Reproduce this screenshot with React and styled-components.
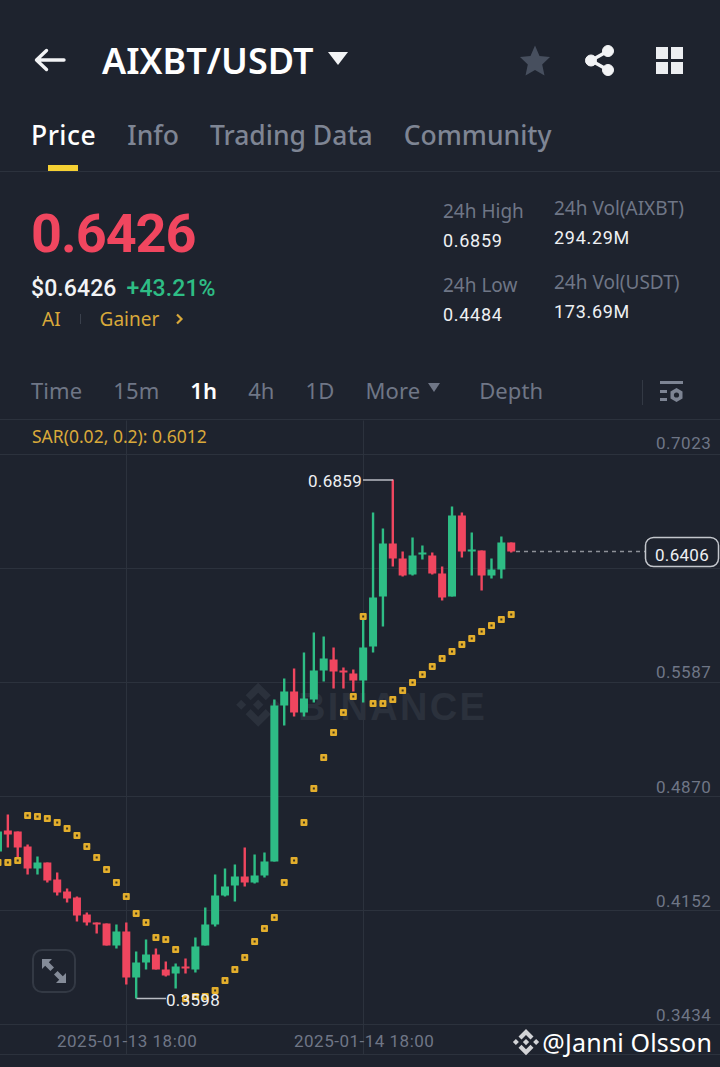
import React from 'react';
import styled, { createGlobalStyle } from 'styled-components';

const CSSReset = createGlobalStyle`
  * { box-sizing: border-box; margin: 0; padding: 0; }
  body { background: #1e232e; font-family: "Noto Sans", sans-serif; }
`;

const BG = '#1e232e';
const GREEN = '#2ebd85';
const RED = '#f0465f';
const GRID = '#2c323d';

const Tabs = ['Price', 'Info', 'Trading Data', 'Community'];
const Intervals = ['Time', '15m', '1h', '4h', '1D'];

/* i, body top, body bottom, wick top, wick bottom, up? */
const candles = [
  [-13, 832, 852, 828, 856, 1], [-12, 831, 835, 815, 848, 0], [-11, 832, 848, 832, 858, 0],
  [-10, 847, 869, 845, 875, 0], [-9, 863, 869, 857, 875, 1], [-8, 863, 881, 863, 883, 0],
  [-7, 880, 893, 873, 896, 0], [-6, 892, 899, 889, 903, 0], [-5, 898, 916, 897, 922, 0],
  [-4, 915, 923, 913, 926, 0], [-3, 923, 925, 923, 934, 0], [-2, 924, 946, 924, 946, 0],
  [-1, 932, 946, 925, 949, 1], [0, 932, 978, 923, 985, 0], [1, 963, 978, 952, 999, 1],
  [2, 955, 963, 940, 970, 1], [3, 955, 970, 949, 970, 0], [4, 970, 976, 962, 977, 0],
  [5, 967, 974, 964, 989, 1], [6, 967, 969, 959, 974, 0], [7, 947, 970, 938, 973, 1],
  [8, 925, 946, 908, 946, 1], [9, 896, 925, 875, 927, 1], [10, 887, 896, 869, 897, 1],
  [11, 877, 886, 865, 902, 1], [12, 877, 883, 848, 887, 0], [13, 876, 883, 855, 884, 1],
  [14, 862, 876, 853, 878, 1], [15, 706, 862, 700, 862, 1], [16, 692, 706, 679, 726, 1],
  [17, 692, 713, 669, 717, 0], [18, 699, 713, 653, 717, 1], [19, 671, 700, 633, 703, 1],
  [20, 659, 671, 637, 682, 1], [21, 660, 672, 648, 689, 0], [22, 671, 673, 668, 689, 0],
  [23, 674, 681, 670, 692, 0], [24, 648, 681, 617, 703, 1], [25, 598, 647, 513, 653, 1],
  [26, 544, 597, 529, 627, 1], [27, 544, 559, 480, 567, 0], [28, 559, 576, 552, 577, 0],
  [29, 556, 575, 538, 576, 1], [30, 553, 555, 546, 560, 1], [31, 556, 574, 553, 575, 0],
  [32, 574, 598, 567, 601, 0], [33, 516, 597, 507, 597, 1], [34, 516, 552, 513, 558, 0],
  [35, 550, 552, 533, 576, 1], [36, 551, 576, 551, 591, 0], [37, 570, 576, 559, 579, 1],
  [38, 543, 570, 537, 579, 1], [39, 543, 552, 543, 553, 0],
];

/* parabolic SAR dots as i, y */
const sar = [
  [-13, 863], [-12, 863], [-11, 861], [-10, 816], [-9, 817], [-8, 819], [-7, 823], [-6, 829],
  [-5, 836], [-4, 847], [-3, 858], [-2, 870], [-1, 883], [0, 897], [1, 914], [2, 923],
  [3, 938], [4, 940], [5, 950], [6, 999], [7, 997], [8, 997], [9, 991], [10, 981], [11, 970],
  [12, 958], [13, 942], [14, 929], [15, 918], [16, 883], [17, 861], [18, 823], [19, 789],
  [20, 758], [21, 733], [22, 713], [23, 697], [24, 617], [25, 704], [26, 704], [27, 700],
  [28, 691], [29, 683], [30, 675], [31, 667], [32, 659], [33, 652], [34, 645], [35, 639],
  [36, 632], [37, 626], [38, 620], [39, 615],
];

const xOf = (i) => 126.3 + i * 9.87;

const gridRows = [455, 569, 683, 797, 911, 1025, 1055];
const axisLabels = [['0.7023', 449], ['0.5587', 678], ['0.4870', 793], ['0.4152', 907], ['0.3434', 1021]];

function BinanceMark({ size, color }) {
  return (
    <svg width={size} height={size} viewBox="0 0 24 24" fill={color}>
      <path d="M12 1.500 18 7.500 15.600 9.900 12 6.300 8.400 9.900 6 7.500Z" />
      <path d="M12 22.500 18 16.500 15.600 14.100 12 17.700 8.400 14.100 6 16.500Z" />
      <path d="M1.500 12 3.900 9.600 6.300 12 3.900 14.400Z" />
      <path d="M22.500 12 20.100 9.600 17.700 12 20.100 14.400Z" />
      <path d="M12 9.500 14.500 12 12 14.500 9.500 12Z" />
    </svg>
  );
}

function App() {
  return (
    <Page>
      <CSSReset />

      <TopBar>
        <BackIcon viewBox="0 0 32 24" fill="none" stroke="#f2f3f5" strokeWidth="3.4" strokeLinecap="round" strokeLinejoin="round">
          <path d="M2.500 12H30M12.500 2.500 2.500 12l10 9.500" />
        </BackIcon>
        <Pair>AIXBT/USDT</Pair>
        <PairCaret />
        <TopIcons>
          <svg width="30" height="31" viewBox="0 0 30 31" fill="#474f5e">
            <path d="M15 0.500 19.500 11 30 12 22.200 19.500 24.500 30.500 15 25 5.500 30.500 7.800 19.500 0 12 10.500 11Z" />
          </svg>
          <svg width="29" height="31" viewBox="0 0 29 31" fill="#f2f3f5" stroke="#f2f3f5">
            <circle cx="6" cy="15.500" r="5.500" />
            <circle cx="23" cy="6" r="5.500" />
            <circle cx="23" cy="25" r="5.500" />
            <path d="M6 15.500 23 6M6 15.500 23 25" strokeWidth="3.500" />
          </svg>
          <GridIcon viewBox="0 0 27 27" fill="#eceef1">
            <rect width="12" height="12" />
            <rect x="15" width="12" height="12" />
            <rect y="15" width="12" height="12" />
            <rect x="15" y="15" width="12" height="12" />
          </GridIcon>
        </TopIcons>
      </TopBar>

      <TabRow>
        {Tabs.map((t) => (
          <Tab key={t} active={t === 'Price'}>{t}</Tab>
        ))}
      </TabRow>

      <Summary>
        <PriceBlock>
          <BigPrice>0.6426</BigPrice>
          <SubPrice>
            <Fiat>$0.6426</Fiat>
            <Change>+43.21%</Change>
          </SubPrice>
          <TagRow>
            <span>AI</span>
            <TagDivider />
            <span>Gainer</span>
            <svg width="9" height="12" viewBox="0 0 9 12" fill="none" stroke="#d9a93a" strokeWidth="2.200">
              <path d="M2 1.500 6.500 6 2 10.500" />
            </svg>
          </TagRow>
        </PriceBlock>
        <Stats>
          <StatColumn offset={29} width={111}>
            <Stat label="24h High" value="0.6859" />
            <Stat label="24h Low" value="0.4484" />
          </StatColumn>
          <StatColumn offset={26} width={166}>
            <Stat label="24h Vol(AIXBT)" value="294.29M" />
            <Stat label="24h Vol(USDT)" value="173.69M" />
          </StatColumn>
        </Stats>
      </Summary>

      <IntervalRow>
        {Intervals.map((t) => (
          <Interval key={t} active={t === '1h'}>{t}</Interval>
        ))}
        <Interval>More</Interval>
        <MoreCaret />
        <Interval>Depth</Interval>
        <ToolBox>
          <svg width="25" height="25" viewBox="0 0 25 25" fill="#7d8493">
            <rect x="1" y="1" width="23" height="3" />
            <rect x="1" y="10" width="7" height="3" />
            <rect x="1" y="18" width="7" height="3" />
            <path d="M17.500 8 23.500 11.500V18.500L17.500 22 11.500 18.500V11.500Z" />
            <circle cx="17.500" cy="15" r="2.600" fill={BG} />
          </svg>
        </ToolBox>
      </IntervalRow>

      <Chart>
        <ChartSvg viewBox="0 421 720 646">
          {gridRows.map((y) => (
            <line key={y} x1="0" x2="720" y1={y} y2={y} stroke={GRID} />
          ))}
          <line x1="126.500" x2="126.500" y1="421" y2="1055" stroke={GRID} />
          <line x1="363.500" x2="363.500" y1="421" y2="1055" stroke={GRID} />

          <g transform="translate(233 680) scale(2.1)" fill="#2b313c">
            <path d="M12 1.500 18 7.500 15.600 9.900 12 6.300 8.400 9.900 6 7.500Z" />
            <path d="M12 22.500 18 16.500 15.600 14.100 12 17.700 8.400 14.100 6 16.500Z" />
            <path d="M1.500 12 3.900 9.600 6.300 12 3.900 14.400Z" />
            <path d="M22.500 12 20.100 9.600 17.700 12 20.100 14.400Z" />
            <path d="M12 9.500 14.500 12 12 14.500 9.500 12Z" />
          </g>
          <Watermark x="298" y="720">BINANCE</Watermark>

          {candles.map(([i, top, bottom, wickTop, wickBottom, up]) => (
            <g key={i} fill={up ? GREEN : RED}>
              <rect x={xOf(i) - 1.200} y={wickTop} width="2.400" height={wickBottom - wickTop} />
              <rect x={xOf(i) - 4} y={top} width="8" height={bottom - top} />
            </g>
          ))}

          {sar.map(([i, y]) => (
            <g key={i}>
              <rect x={xOf(i) - 3.500} y={y - 3.500} width="7" height="7" rx="1" fill="#e3ae2c" />
              <rect x={xOf(i) - 1} y={y - 1} width="2" height="2" fill="#3a3320" />
            </g>
          ))}

          <path d="M363 480.500H393M136.500 999H166" fill="none" stroke="#b9bcc3" strokeWidth="1.500" />
          <PeakLabel x="308" y="487">0.6859</PeakLabel>
          <PeakLabel x="166" y="1006">0.3598</PeakLabel>

          <line x1="516" x2="645" y1="552" y2="552" stroke="#8d9097" strokeWidth="1.500" strokeDasharray="4 4" />
          <rect x="645.500" y="538" width="73" height="29" rx="8" fill={BG} stroke="#c3c6cc" strokeWidth="1.500" />
          <PeakLabel x="655" y="561">0.6406</PeakLabel>

          {axisLabels.map(([t, y]) => (
            <AxisText key={t} x="656" y={y}>{t}</AxisText>
          ))}
          <AxisText x="57" y="1047">2025-01-13 18:00</AxisText>
          <AxisText x="294" y="1047">2025-01-14 18:00</AxisText>
        </ChartSvg>

        <SarLegend>SAR(0.02, 0.2): 0.6012</SarLegend>

        <ExpandButton>
          <svg width="26" height="26" viewBox="0 0 26 26" fill="#848b98">
            <path d="M1 1H11L7.800 4.200 13 9.400 9.400 13 4.200 7.800 1 11Z" />
            <path d="M25 25H15L18.200 21.800 13 16.600 16.600 13 21.800 18.200 25 15Z" />
          </svg>
        </ExpandButton>

        <Credit>
          <BinanceMark size={30} color="#d2d3d6" />
          <span>@Janni Olsson</span>
        </Credit>
      </Chart>
    </Page>
  );
}

function Stat({ label, value }) {
  return (
    <StatBlock>
      <StatLabel>{label}</StatLabel>
      <StatValue>{value}</StatValue>
    </StatBlock>
  );
}

const Page = styled.main`
  background: ${BG};
  display: flex;
  flex-direction: column;
  height: 1067px;
  overflow: hidden;
  width: 720px;
`;

const TopBar = styled.header`
  align-items: center;
  display: flex;
  height: 120px;
  padding: 0 37px 0 34px;
`;

const BackIcon = styled.svg`
  height: 24px;
  margin-right: 36px;
  width: 32px;
`;

const Pair = styled.h1`
  color: #ffffff;
  font-family: "Noto Sans", sans-serif;
  font-size: 36px;
  font-weight: 600;
  letter-spacing: 0;
`;

const PairCaret = styled.i`
  border-left: 10px solid transparent;
  border-right: 10px solid transparent;
  border-top: 13px solid #f2f3f5;
  margin: -3px 0 0 14px;
`;

const TopIcons = styled.div`
  align-items: center;
  display: flex;
  gap: 35px;
  margin-left: auto;
`;

const GridIcon = styled.svg`
  height: 27px;
  margin-left: 7px;
  width: 27px;
`;

const TabRow = styled.nav`
  border-bottom: 1px solid ${GRID};
  display: flex;
  gap: 31px;
  height: 52px;
  padding: 0 0 0 31px;
`;

const Tab = styled.div`
  color: ${({ active }) => (active ? '#ffffff' : '#7e8594')};
  font-size: 26.500px;
  font-weight: 500;
  height: 51px;
  letter-spacing: ${({ active }) => (active ? '0.5px' : '0')};
  line-height: 30px;
  position: relative;

  &::after {
    background: #f5d033;
    bottom: 0;
    content: "";
    display: ${({ active }) => (active ? 'block' : 'none')};
    height: 6px;
    left: 17px;
    position: absolute;
    width: 30px;
  }
`;

const Summary = styled.section`
  display: flex;
  height: 200px;
  justify-content: space-between;
  padding: 22px 0 0 31px;
`;

const PriceBlock = styled.div`
  display: flex;
  flex-direction: column;
`;

const BigPrice = styled.div`
  color: ${RED};
  font-family: Roboto, sans-serif;
  font-size: 54px;
  font-weight: 700;
  letter-spacing: -1px;
  line-height: 78px;
  margin-top: 1px;
`;

const SubPrice = styled.div`
  align-items: baseline;
  display: flex;
  font-family: Roboto, sans-serif;
  font-size: 23px;
  font-weight: 500;
  gap: 10px;
  letter-spacing: 0.1px;
  line-height: 30px;
  margin-top: 1px;
`;

const Fiat = styled.span`
  color: #f2f3f5;
`;

const Change = styled.span`
  color: ${GREEN};
`;

const TagRow = styled.div`
  align-items: center;
  color: #d9a93a;
  display: flex;
  font-size: 19px;
  gap: 19px;
  line-height: 26px;
  margin: 2px 0 0 11px;

  svg {
    margin-left: -3px;
  }
`;

const TagDivider = styled.i`
  background: #3a404c;
  height: 10px;
  width: 1px;
`;

const Stats = styled.div`
  display: flex;
`;

const StatColumn = styled.div`
  display: flex;
  flex-direction: column;
  gap: 17px;
  margin-top: ${({ offset }) => offset - 29}px;
  padding-top: 4px;
  width: ${({ width }) => width}px;
`;

const StatBlock = styled.div`
  display: flex;
  flex-direction: column;
  gap: 3px;
`;

const StatLabel = styled.div`
  color: #6f7686;
  font-size: 19px;
  line-height: 26px;
  white-space: nowrap;
`;

const StatValue = styled.div`
  color: #eef0f3;
  font-family: Roboto, sans-serif;
  font-size: 18px;
  font-weight: 400;
  letter-spacing: 0.7px;
  line-height: 28px;
`;

const IntervalRow = styled.div`
  align-items: center;
  border-bottom: 1px solid ${GRID};
  display: flex;
  gap: 31px;
  height: 49px;
  margin-top: -1px;
  padding: 0 0 11px 31px;
  position: relative;
`;

const Interval = styled.span`
  color: ${({ active }) => (active ? '#ffffff' : '#6f7686')};
  font-size: 22px;
  font-weight: ${({ active }) => (active ? 600 : 400)};
  letter-spacing: 0.1px;
`;

const MoreCaret = styled.i`
  border-left: 6px solid transparent;
  border-right: 6px solid transparent;
  border-top: 9px solid #6f7686;
  margin: -5px 8px 0 -23px;
`;

const ToolBox = styled.div`
  border-left: 1px solid #333944;
  display: flex;
  margin: 6px 36px 0 auto;
  padding-left: 16px;
`;

const Chart = styled.div`
  flex: 1;
  position: relative;
`;

const ChartSvg = styled.svg`
  display: block;
  height: 100%;
  width: 100%;
`;

const Watermark = styled.text`
  fill: #2b313c;
  font-family: "Liberation Sans", sans-serif;
  font-size: 38px;
  font-weight: 700;
  letter-spacing: 2.300px;
`;

const PeakLabel = styled.text`
  fill: #eef0f3;
  font-family: Roboto, sans-serif;
  font-size: 17px;
  letter-spacing: 0.3px;
`;

const AxisText = styled.text`
  fill: #6f7686;
  font-family: Roboto, sans-serif;
  font-size: 17px;
  letter-spacing: 0.5px;
`;

const SarLegend = styled.div`
  color: #d9a93a;
  font-size: 17.500px;
  left: 32px;
  position: absolute;
  top: 4px;
`;

const ExpandButton = styled.div`
  align-items: center;
  border: 2px solid #333944;
  border-radius: 10px;
  display: flex;
  height: 44px;
  justify-content: center;
  left: 32px;
  position: absolute;
  top: 529px;
  width: 44px;
`;

const Credit = styled.div`
  align-items: center;
  bottom: 8px;
  color: #ffffff;
  display: flex;
  font-size: 25px;
  gap: 1px;
  letter-spacing: 0.15px;
  position: absolute;
  right: 8px;
`;

export default App;
